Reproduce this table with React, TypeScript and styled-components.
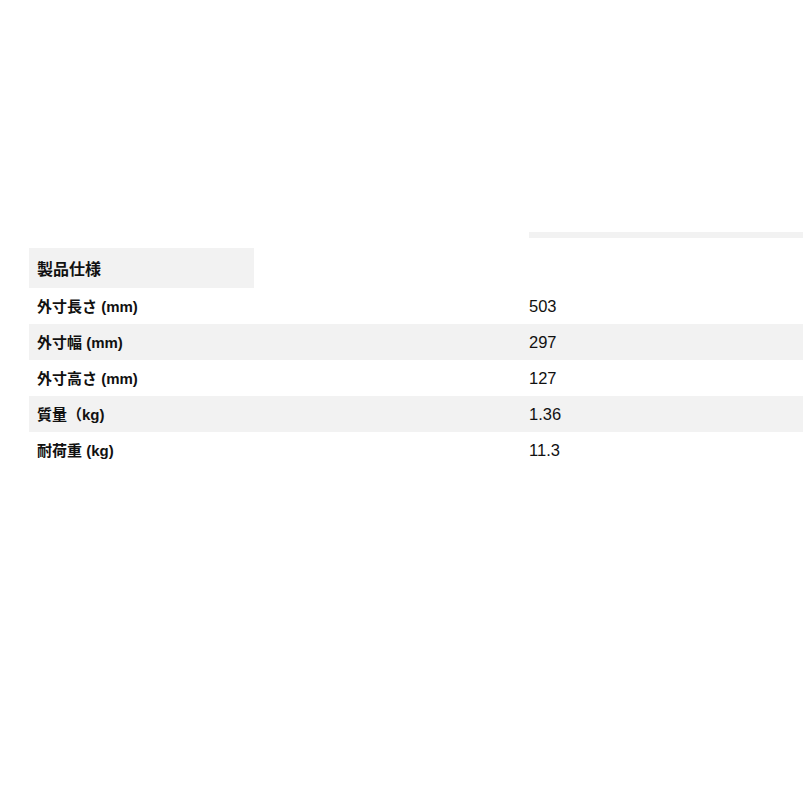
import React from "react";
import styled, { createGlobalStyle } from "styled-components";

const Global = createGlobalStyle`
  html, body {
    margin: 0;
    padding: 0;
    background: #ffffff;
    overflow: hidden;
  }
  body {
    font-family: "Liberation Sans", Arial, "Noto Sans CJK JP", sans-serif;
    color: #111111;
  }
`;

const Page = styled.div`
  padding: 232px 0 0 29px;
  width: 800px;
`;

const SpecTable = styled.section`
  display: flex;
  flex-direction: column;
`;

const HeaderRow = styled.div`
  display: grid;
  grid-template-columns: 500px 1fr;
  align-items: start;
`;

const TitleCell = styled.h2`
  margin: 16px 0 0;
  width: 225px;
  height: 40px;
  box-sizing: border-box;
  padding: 0 8px 1px;
  display: flex;
  align-items: center;
  background: #f2f2f2;
  font-size: 16px;
  font-weight: 700;
  color: #111111;
`;

const HeaderStrip = styled.div`
  height: 6px;
  background: #f2f2f2;
`;

const Row = styled.div<{ $shaded: boolean }>`
  display: grid;
  grid-template-columns: 500px 1fr;
  height: 36px;
  align-items: center;
  background: ${(p) => (p.$shaded ? "#f2f2f2" : "#ffffff")};
`;

const Label = styled.div`
  padding: 0 0 2px 8px;
  font-size: 15px;
  font-weight: 700;
  color: #111111;
`;

const Value = styled.div`
  font-size: 16.5px;
  color: #111111;
`;

const rows: [string, string][] = [
  ["外寸長さ (mm)", "503"],
  ["外寸幅 (mm)", "297"],
  ["外寸高さ (mm)", "127"],
  ["質量（kg)", "1.36"],
  ["耐荷重 (kg)", "11.3"],
];

export default function App() {
  return (
    <>
      <Global />
      <Page>
        <SpecTable>
          <HeaderRow>
            <TitleCell>製品仕様</TitleCell>
            <HeaderStrip />
          </HeaderRow>
          {rows.map(([label, value], i) => (
            <Row key={label} $shaded={i % 2 === 1}>
              <Label>{label}</Label>
              <Value>{value}</Value>
            </Row>
          ))}
        </SpecTable>
      </Page>
    </>
  );
}
